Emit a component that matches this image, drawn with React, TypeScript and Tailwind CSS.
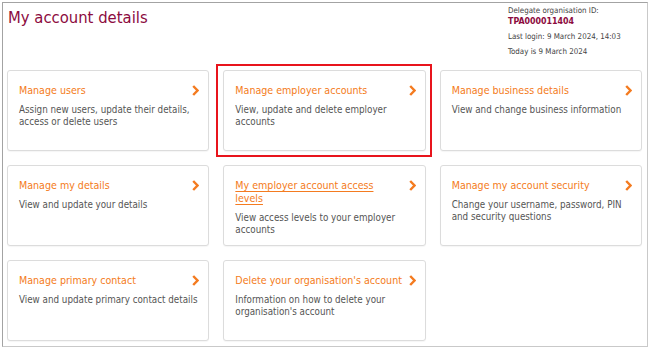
import React from 'react';

type Tile = {
  title: string;
  text: string;
  underline?: boolean;
  highlight?: boolean;
};

const tiles: Tile[] = [
  { title: 'Manage users', text: 'Assign new users, update their details, access or delete users' },
  { title: 'Manage employer accounts', text: 'View, update and delete employer accounts', highlight: true },
  { title: 'Manage business details', text: 'View and change business information' },
  { title: 'Manage my details', text: 'View and update your details' },
  { title: 'My employer account access levels', text: 'View access levels to your employer accounts', underline: true },
  { title: 'Manage my account security', text: 'Change your username, password, PIN and security questions' },
  { title: 'Manage primary contact', text: 'View and update primary contact details' },
  { title: "Delete your organisation's account", text: "Information on how to delete your organisation's account" },
];

const font = { fontFamily: '"DejaVu Sans Condensed", "DejaVu Sans", Tahoma, sans-serif' };

function Chevron() {
  return (
    <svg viewBox="0 0 7 11" className="mt-[1px] h-[11px] w-[7px] shrink-0">
      <polyline points="1.2,1 5.5,5.5 1.2,10" fill="none" stroke="#f47b20" strokeWidth="2.4" />
    </svg>
  );
}

function TileCard({ tile }: { tile: Tile }) {
  return (
    <div className="relative">
      {tile.highlight && (
        <div className="pointer-events-none absolute -top-[6px] -bottom-[6px] -left-[7px] -right-[6px] border-2 border-[#e8141c]" />
      )}
      <div className="h-[81px] rounded-[3px] border border-[#dcdcdc] bg-white pl-[11px] pr-[9px] pt-[13px] shadow-[0_1px_1px_rgba(0,0,0,0.04)]">
        <div className="flex items-start gap-[5px]">
          <span
            className={`flex-1 text-[10.6px] leading-[13px] text-[#f47b20] ${tile.underline ? 'underline underline-offset-2' : ''}`}
          >
            {tile.title}
          </span>
          <Chevron />
        </div>
        <p className="mt-[7px] text-[9.75px] leading-[12px] text-[#555]">{tile.text}</p>
      </div>
    </div>
  );
}

export default function App() {
  return (
    <div className="h-[349px] w-[650px] bg-white p-[2px]" style={font}>
      <div className="h-[345px] border border-t-[#a3a3a3] border-l-[#a3a3a3] border-r-[#c9c9c9] border-b-[#c9c9c9]">
        <div className="flex">
          <h1 className="flex-1 pl-[5px] pt-[5px] text-[16.5px] leading-[20px] text-[#8c0b3e]">My account details</h1>
          <div className="w-[139px] pt-[3px] text-[7.9px] leading-[10px] text-[#444]">
            <div>Delegate organisation ID:</div>
            <div className="text-[8.8px] font-bold leading-[10px] text-[#8c0b3e]">TPA000011404</div>
            <div className="mt-[6px]">Last login: 9 March 2024, 14:03</div>
            <div className="mt-[5px]">Today is 9 March 2024</div>
          </div>
        </div>
        <div className="mt-[13px] grid grid-cols-3 gap-x-[14px] gap-y-[14px] pl-[4px] pr-[5px]">
          {tiles.map((t) => (
            <TileCard key={t.title} tile={t} />
          ))}
        </div>
      </div>
    </div>
  );
}
